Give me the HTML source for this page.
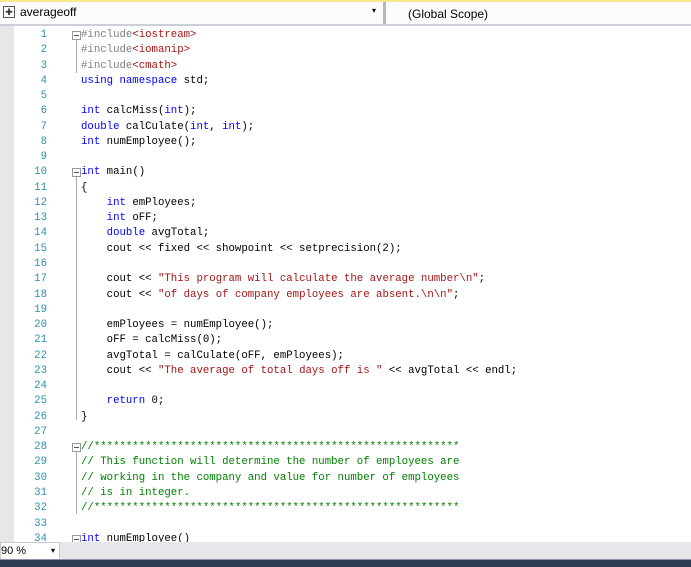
<!DOCTYPE html><html><head><style>
body{margin:0;width:691px;height:566px;overflow:hidden;background:#fff;font-family:"Liberation Sans",sans-serif;position:relative}
.top{position:absolute;left:0;top:0;width:691px;height:2px;background:#f5e98a}
.bar{position:absolute;left:0;top:2px;width:691px;height:22px;background:#fcfcfc;border-bottom:2px solid #ccced8}
.dd1{position:absolute;left:0;top:0;width:383px;height:22px;border-right:3px solid #b4b7c2;font-size:12px}
.dd2{position:absolute;left:408px;top:5px;font-size:12px}
.gut{position:absolute;left:0;top:26px;width:14px;height:516px;background:#e6e7e8}
.code{position:absolute;left:0;top:28px;width:691px;font-family:"Liberation Mono",monospace;font-size:10.7px}
.l{height:15.27px;line-height:15.27px;position:relative;white-space:pre}
.n{position:absolute;left:14px;width:33px;text-align:right;color:#2b91af}
.t{position:absolute;left:81px}
.k{color:#0000ff}.p{color:#808080}.s{color:#a31515}.c{color:#008000}
.fold{position:absolute;width:7px;height:7px;border:1px solid #999;left:72px;background:#fff}
.fold:after{content:"";position:absolute;left:1px;top:3px;width:5px;height:1px;background:#555}
.vl{position:absolute;width:1px;background:#aaa;left:76px}
.status{position:absolute;left:0;top:542px;width:691px;height:18px;background:#e6e6eb}
.zoom{position:absolute;left:0;top:542px;width:58px;height:16px;background:#fff;border:1px solid #ccc;font-size:11px;line-height:16px}
.navy{position:absolute;left:0;top:559px;width:691px;height:7px;background:#2d3b55;border-top:1px solid #8a93a8}
</style></head><body>
<div class="top"></div>
<div class="bar"><div class="dd1"><span style="position:absolute;left:3px;top:4px;width:12px;height:12px;border:1px solid #555;box-sizing:border-box;font-size:9px;line-height:10px;text-align:center;color:#333">✚</span><span style="position:absolute;left:20px;top:3px">averageoff</span><span style="position:absolute;left:372px;top:4px;font-size:8px">▾</span></div><div class="dd2">(Global Scope)</div></div>
<div class="gut"></div>
<div class="code"><div class="l"><span class="n">1</span><span class="t"><span class="p">#include</span><span class="s">&lt;iostream&gt;</span></span></div><div class="l"><span class="n">2</span><span class="t"><span class="p">#include</span><span class="s">&lt;iomanip&gt;</span></span></div><div class="l"><span class="n">3</span><span class="t"><span class="p">#include</span><span class="s">&lt;cmath&gt;</span></span></div><div class="l"><span class="n">4</span><span class="t"><span class="k">using namespace</span> std;</span></div><div class="l"><span class="n">5</span></div><div class="l"><span class="n">6</span><span class="t"><span class="k">int</span> calcMiss(<span class="k">int</span>);</span></div><div class="l"><span class="n">7</span><span class="t"><span class="k">double</span> calCulate(<span class="k">int</span>, <span class="k">int</span>);</span></div><div class="l"><span class="n">8</span><span class="t"><span class="k">int</span> numEmployee();</span></div><div class="l"><span class="n">9</span></div><div class="l"><span class="n">10</span><span class="t"><span class="k">int</span> main()</span></div><div class="l"><span class="n">11</span><span class="t">{</span></div><div class="l"><span class="n">12</span><span class="t">    <span class="k">int</span> emPloyees;</span></div><div class="l"><span class="n">13</span><span class="t">    <span class="k">int</span> oFF;</span></div><div class="l"><span class="n">14</span><span class="t">    <span class="k">double</span> avgTotal;</span></div><div class="l"><span class="n">15</span><span class="t">    cout &lt;&lt; fixed &lt;&lt; showpoint &lt;&lt; setprecision(2);</span></div><div class="l"><span class="n">16</span></div><div class="l"><span class="n">17</span><span class="t">    cout &lt;&lt; <span class="s">"This program will calculate the average number\n"</span>;</span></div><div class="l"><span class="n">18</span><span class="t">    cout &lt;&lt; <span class="s">"of days of company employees are absent.\n\n"</span>;</span></div><div class="l"><span class="n">19</span></div><div class="l"><span class="n">20</span><span class="t">    emPloyees = numEmployee();</span></div><div class="l"><span class="n">21</span><span class="t">    oFF = calcMiss(0);</span></div><div class="l"><span class="n">22</span><span class="t">    avgTotal = calCulate(oFF, emPloyees);</span></div><div class="l"><span class="n">23</span><span class="t">    cout &lt;&lt; <span class="s">"The average of total days off is "</span> &lt;&lt; avgTotal &lt;&lt; endl;</span></div><div class="l"><span class="n">24</span></div><div class="l"><span class="n">25</span><span class="t">    <span class="k">return</span> 0;</span></div><div class="l"><span class="n">26</span><span class="t">}</span></div><div class="l"><span class="n">27</span></div><div class="l"><span class="n">28</span><span class="t c">//*********************************************************</span></div><div class="l"><span class="n">29</span><span class="t c">// This function will determine the number of employees are</span></div><div class="l"><span class="n">30</span><span class="t c">// working in the company and value for number of employees</span></div><div class="l"><span class="n">31</span><span class="t c">// is in integer.</span></div><div class="l"><span class="n">32</span><span class="t c">//*********************************************************</span></div><div class="l"><span class="n">33</span></div><div class="l"><span class="n">34</span><span class="t"><span class="k">int</span> numEmployee()</span></div></div>
<div class="vl" style="top:40px;height:33px"></div><div class="fold" style="top:31px"></div>
<div class="vl" style="top:177px;height:243px"></div><div class="fold" style="top:168px"></div>
<div class="vl" style="top:452px;height:62px"></div><div class="fold" style="top:443px"></div>
<div class="fold" style="top:535px"></div>
<div class="status"></div>
<div class="zoom">90 %<span style="position:absolute;right:4px;top:0;font-size:8px">▾</span></div>
<div class="navy"></div>
</body></html>
